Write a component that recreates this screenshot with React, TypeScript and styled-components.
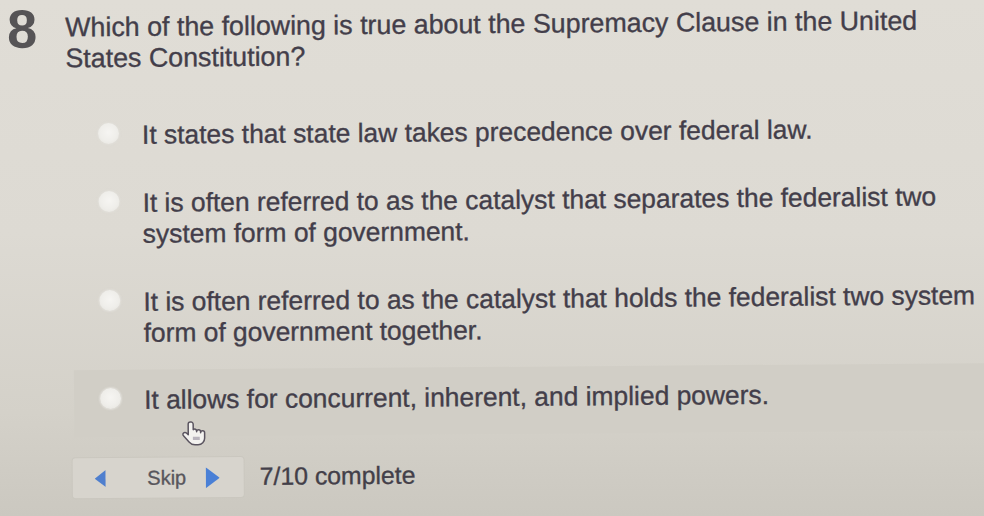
import React from "react";
import styled, { createGlobalStyle } from "styled-components";

const GlobalStyle = createGlobalStyle`
  html, body {
    margin: 0;
    padding: 0;
    width: 984px;
    height: 516px;
    overflow: hidden;
    background: linear-gradient(180deg, #e0ddd6 0%, #dddad3 45%, #d4d1c9 80%, #cbc8c0 100%);
  }
  * { box-sizing: border-box; }
`;

const Page = styled.div`
  width: 984px;
  height: 516px;
  transform: rotate(-0.45deg);
  transform-origin: 50% 50%;
  font-family: "Liberation Sans", Arial, sans-serif;
  color: #433e4a;
  -webkit-text-stroke: 0.35px currentColor;
  display: flex;
  flex-direction: column;
`;

const Header = styled.div`
  display: flex;
  align-items: flex-start;
`;

const Number = styled.div`
  width: 67px;
  padding-left: 9px;
  font-size: 54px;
  font-weight: 700;
  line-height: 50px;
  color: #565456;
  -webkit-text-stroke: 0;
`;

const Question = styled.p`
  margin: 9px 0 0 0;
  max-width: 890px;
  font-size: 26.8px;
  line-height: 31px;
`;

const Options = styled.div`
  display: flex;
  flex-direction: column;
  margin-top: 27px;
`;

const Option = styled.div<{ $active?: boolean }>`
  position: relative;
  display: flex;
  align-items: flex-start;
  gap: 23px;
  margin-left: 73px;
  padding: ${(p) => (p.$active ? "15px 0 21px 26px" : "18.5px 0 18.5px 26px")};
  margin-top: ${(p) => (p.$active ? "3px" : "0")};
  background: ${(p) => (p.$active ? "#d1cec6" : "transparent")};
`;

const Radio = styled.span`
  flex: none;
  width: 21px;
  height: 21px;
  margin-top: 3px;
  border-radius: 50%;
  background: radial-gradient(circle at 50% 45%, #f6f5f2 0%, #efeeea 55%, #e4e2dc 100%);
  box-shadow: 0 0 1.5px 1px rgba(224, 222, 216, 0.9);
`;

const OptionText = styled.span`
  font-size: 26.4px;
  line-height: 31px;
`;

const Pointer = styled.svg`
  position: absolute;
  left: 106px;
  top: 50px;
  width: 30px;
  height: 30px;
`;

const Footer = styled.div`
  display: flex;
  align-items: center;
  gap: 15px;
  margin: 20px 0 0 70px;
`;

const SkipBox = styled.div`
  width: 173px;
  height: 42px;
  display: flex;
  align-items: center;
  justify-content: space-between;
  padding: 0 24px 0 22px;
  border: 1px solid #cac7bf;
  border-radius: 4px;
  background: #d7d4cd;
`;

const SkipLabel = styled.span`
  font-size: 20px;
  color: #58565c;
  margin-left: 22px;
`;

const Arrow = styled.svg`
  display: block;
`;

const Progress = styled.span`
  font-size: 24.8px;
  color: #433f49;
`;

const options = [
  "It states that state law takes precedence over federal law.",
  "It is often referred to as the catalyst that separates the federalist two system form of government.",
  "It is often referred to as the catalyst that holds the federalist two system form of government together.",
  "It allows for concurrent, inherent, and implied powers.",
];

export default function App() {
  return (
    <>
      <GlobalStyle />
      <Page>
        <Header>
          <Number>8</Number>
          <Question>
            Which of the following is true about the Supremacy Clause in the United States Constitution?
          </Question>
        </Header>
        <Options>
          {options.map((text, i) => (
            <Option key={i} $active={i === 3}>
              <Radio />
              <OptionText>{text}</OptionText>
              {i === 3 && (
                <Pointer viewBox="0 0 24 24">
                  <path
                    d="M8 2.2c-1 0-1.7.8-1.7 1.7v8.4l-1.4-1.4c-.7-.7-1.8-.7-2.4 0-.6.6-.6 1.6 0 2.2l4.4 4.9c1.2 1.4 2.9 2.3 4.8 2.3h2.4c3 0 5.3-2.4 5.3-5.3v-4.3c0-.9-.7-1.6-1.6-1.6-.9 0-1.6.7-1.6 1.6v-.7c0-.9-.7-1.6-1.6-1.6s-1.6.7-1.6 1.6v-.6c0-.9-.7-1.6-1.6-1.6-.4 0-.8.2-1.1.4V3.9c0-.9-.8-1.7-1.7-1.7z"
                    fill="#f3f2ef"
                    stroke="#5b5560"
                    strokeWidth="1.2"
                    strokeLinejoin="round"
                  />
                  <rect x="10" y="14" width="5.5" height="2.6" fill="#b9b4bd" />
                </Pointer>
              )}
            </Option>
          ))}
        </Options>
        <Footer>
          <SkipBox>
            <Arrow width="11" height="17" viewBox="0 0 11 17">
              <polygon points="11,0 11,17 0,8.5" fill="#4f7fce" />
            </Arrow>
            <SkipLabel>Skip</SkipLabel>
            <Arrow width="14" height="21" viewBox="0 0 14 21">
              <polygon points="0,0 14,10.5 0,21" fill="#4a80d6" />
            </Arrow>
          </SkipBox>
          <Progress>7/10 complete</Progress>
        </Footer>
      </Page>
    </>
  );
}
